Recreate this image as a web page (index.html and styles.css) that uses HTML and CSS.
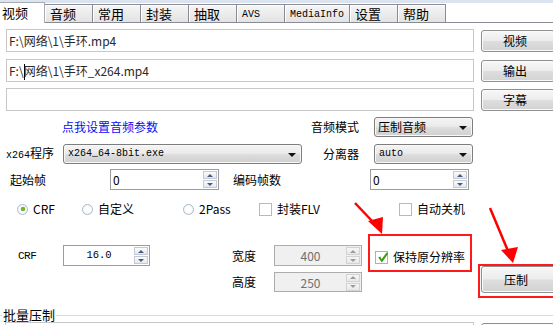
FILE: index.html
```html
<!DOCTYPE html>
<html lang="zh-CN">
<head>
<meta charset="utf-8">
<title>视频压制</title>
<link rel="stylesheet" href="styles.css">
</head>
<body>
<div class="tabs">
  <div class="tab active">视频</div>
  <div class="tab">音频</div>
  <div class="tab">常用</div>
  <div class="tab">封装</div>
  <div class="tab">抽取</div>
  <div class="tab tab-mono">AVS</div>
  <div class="tab tab-mono tab-wide">MediaInfo</div>
  <div class="tab">设置</div>
  <div class="tab">帮助</div>
</div>

<div class="panel">
  <div class="row r-file r1">
    <div class="field">F:\网络\1\手环.mp4</div>
    <div class="btn side">视频</div>
  </div>
  <div class="row r-file r2">
    <div class="field">F:\<span class="caret"></span>网络\1\手环_x264.mp4</div>
    <div class="btn side">输出</div>
  </div>
  <div class="row r-file r3">
    <div class="field"></div>
    <div class="btn side">字幕</div>
  </div>

  <div class="row r4">
    <span class="link">点我设置音频参数</span>
    <span class="lbl w-audio">音频模式</span>
    <div class="combo w-small"><span class="combo-text">压制音频</span><span class="arrow"></span></div>
  </div>

  <div class="row r5">
    <span class="lbl w-x264"><span class="mono">x264</span>程序</span>
    <div class="combo w-x264box"><span class="combo-text mono">x264_64-8bit.exe</span><span class="arrow"></span></div>
    <span class="lbl w-demux">分离器</span>
    <div class="combo w-small"><span class="combo-text mono">auto</span><span class="arrow"></span></div>
  </div>

  <div class="row r6">
    <span class="lbl w-start">起始帧</span>
    <div class="spin w-startbox"><span class="spin-val">0</span><span class="spin-btns"><span class="sb up"></span><span class="sb down"></span></span></div>
    <span class="lbl w-count">编码帧数</span>
    <div class="spin w-small"><span class="spin-val">0</span><span class="spin-btns"><span class="sb up"></span><span class="sb down"></span></span></div>
  </div>

  <div class="row r7">
    <label class="opt o1"><span class="radio checked"></span>CRF</label>
    <label class="opt o2"><span class="radio"></span>自定义</label>
    <label class="opt o3"><span class="radio"></span>2Pass</label>
    <label class="opt o4"><span class="check"></span>封装FLV</label>
    <label class="opt"><span class="check"></span>自动关机</label>
  </div>

  <div class="lower">
    <div class="row col-crf">
      <span class="lbl mono crf-lbl w-crf">CRF</span>
      <div class="spin w-crfbox"><span class="spin-val center mono">16.0</span><span class="spin-btns"><span class="sb up"></span><span class="sb down"></span></span></div>
    </div>
    <div class="col-wh">
      <div class="row wh-row">
        <span class="lbl w-wh">宽度</span>
        <div class="spin disabled w-whbox"><span class="spin-val center">400</span><span class="spin-btns"><span class="sb up"></span><span class="sb down"></span></span></div>
      </div>
      <div class="row wh-row h2">
        <span class="lbl w-wh">高度</span>
        <div class="spin disabled w-whbox"><span class="spin-val center">250</span><span class="spin-btns"><span class="sb up"></span><span class="sb down"></span></span></div>
      </div>
    </div>
    <div class="redbox keep">
      <label class="opt"><span class="check on"><svg width="13" height="13" viewBox="0 0 13 13"><path d="M2.2 6.6 L4.3 5.6 L5.6 8.2 L10.6 1.4 L12.2 2.6 L5.9 11.6 Z" fill="#3f9a1a"/></svg></span>保持原分辨率</label>
    </div>
    <div class="redbox go">
      <div class="btn big">压制</div>
    </div>
  </div>

  <div class="group">
    <span class="gline gl-left"></span>
    <span class="gtitle">批量压制</span>
    <span class="gline gl-right"></span>
  </div>
  <div class="row r-batch">
    <div class="field batch"></div>
    <div class="btn side batch-btn"></div>
  </div>
</div>

<svg class="arrows" width="553" height="325" viewBox="0 0 553 325">
  <line x1="355" y1="203" x2="374" y2="223" stroke="#ff0000" stroke-width="2.5"/>
  <polygon points="368,221 383,217 382,234" fill="#ff0000"/>
  <line x1="490" y1="208" x2="508" y2="251" stroke="#ff0000" stroke-width="2.5"/>
  <polygon points="501,250 518,247 513,263" fill="#ff0000"/>
</svg>
</body>
</html>
```

FILE: styles.css
```css
* { box-sizing: border-box; }
html, body { margin: 0; padding: 0; }
body {
  width: 553px;
  height: 325px;
  overflow: hidden;
  position: relative;
  background: #fff;
  font-family: "Noto Sans CJK SC", "Noto Sans", sans-serif;
  font-size: 12px;
  line-height: 16px;
  color: #000;
}
.mono { font-family: "Liberation Mono", "DejaVu Sans Mono", monospace; font-size: 10px; }

/* tabs */
.tabs {
  display: flex;
  align-items: flex-end;
  height: 23px;
  border-bottom: 1px solid #898c95;
  background: linear-gradient(#dae3ee 0, #dae3ee 3px, #fff 3px);
}
.tab {
  flex: none;
  width: 49px;
  height: 18px;
  margin-right: -1px;
  padding: 1px 0 0 5px;
  border: 1px solid #898c95;
  border-bottom: 0;
  background: linear-gradient(#f5f5f5, #e3e3e3);
  box-shadow: inset 1px 1px 0 #fff;
  font-size: 13px;
  line-height: 16px;
}
.tab.active {
  width: 45px;
  height: 21px;
  margin-bottom: -1px;
  padding: 2px 0 0 2px;
  background: #fff;
  border-left: 0;
  border-color: #a8abb2;
  box-shadow: none;
  position: relative;
  z-index: 1;
}
.tab-mono { font-family: "Liberation Mono", "DejaVu Sans Mono", monospace; font-size: 10px; padding-top: 2px; }
.tab-wide { width: 66px; }

/* panel */
.panel { padding-left: 6px; }
.row { display: flex; align-items: center; }
.r-file { height: 23px; align-items: flex-start; }
.r1 { margin-top: 6px; }
.r2 { margin-top: 7px; }
.r3 { margin-top: 6px; }
.r4 { margin-top: 6px; height: 20px; }
.r5 { margin-top: 7px; height: 20px; }
.r6 { margin-top: 5px; height: 21px; }
.r7 { margin-top: 11px; height: 16px; }

.field {
  flex: none;
  width: 468px;
  height: 23px;
  border: 1px solid #c8c8c8;
  padding: 2px 0 0 2px;
  line-height: 17px;
  color: #2a2a2a;
  white-space: nowrap;
}
.caret {
  display: inline-block;
  width: 0;
  height: 16px;
  border-left: 1px solid #000;
  vertical-align: -4px;
  margin-right: -1px;
}
.btn {
  flex: none;
  display: flex;
  align-items: center;
  justify-content: center;
  width: 74px;
  border: 1px solid #8f8f8f;
  border-radius: 3px;
  background: linear-gradient(#f7f7f7, #ececec 48%, #dedede 52%, #d2d2d2);
  box-shadow: inset 0 0 0 1px #fbfbfb;
  padding-right: 6px;
}
.btn.side { height: 22px; margin-left: 7px; margin-top: 1px; }
.btn.big { height: 27px; }

.link { color: #0a0af5; margin-left: 56px; width: 249px; flex: none; }
.lbl { flex: none; white-space: nowrap; }
.w-audio { width: 63px; }
.w-x264 { width: 57px; }
.w-demux { width: 51px; margin-left: 21px; }
.w-start { width: 100px; margin-left: 4px; }
.w-count { width: 137px; margin-left: 14px; }
.w-crf { width: 45px; margin-left: 12px; }
.crf-lbl { font-size: 11px; letter-spacing: -0.5px; }
.w-wh { width: 42px; }

.combo {
  flex: none;
  display: flex;
  align-items: center;
  height: 20px;
  border: 1px solid #7d7d7d;
  border-radius: 3px;
  background: linear-gradient(#f4f4f4, #ebebeb 45%, #dcdcdc 55%, #d0d0d0);
  box-shadow: inset 0 0 0 1px #f8f8f8;
  padding-left: 3px;
}
.combo-text { white-space: nowrap; }
.combo-text.mono { padding-left: 1px; }
.arrow {
  margin-left: auto;
  margin-right: 5px;
  margin-top: 2px;
  width: 0;
  height: 0;
  border-left: 4px solid transparent;
  border-right: 4px solid transparent;
  border-top: 4px solid #111;
}
.w-small { width: 99px; }
.w-x264box { width: 239px; }

.spin {
  flex: none;
  display: flex;
  height: 21px;
  border: 1px solid #9c9c9c;
  background: #fff;
}
.spin-val { flex: 1; padding-left: 2px; line-height: 19px; }
.spin-val.center { text-align: center; padding-left: 0; }
.spin-val.mono { font-size: 10.5px; }
.spin-btns { display: flex; flex-direction: column; justify-content: center; gap: 1px; width: 14px; margin-right: 1px; }
.sb {
  height: 8px;
  border: 1px solid #c3cad4;
  background: linear-gradient(#fafbfc, #e4e8ee);
  display: flex;
  align-items: center;
  justify-content: center;
}
.sb::before {
  content: "";
  width: 0;
  height: 0;
  border-left: 3px solid transparent;
  border-right: 3px solid transparent;
}
.sb.up::before { border-bottom: 3px solid #4a5a82; }
.sb.down::before { border-top: 3px solid #4a5a82; }
.spin.disabled { background: #f0f0f0; border-color: #adadad; color: #6f6f6f; }
.spin.disabled .sb { border-color: #d3d3d3; background: linear-gradient(#f6f6f6, #e8e8e8); }
.spin.disabled .sb.up::before { border-bottom-color: #9c9c9c; }
.spin.disabled .sb.down::before { border-top-color: #9c9c9c; }
.w-startbox { width: 109px; }
.w-crfbox { width: 87px; }
.w-whbox { width: 88px; height: 21px; }
.h2 .w-whbox { height: 20px; }

.opt { display: flex; align-items: center; gap: 5px; flex: none; white-space: nowrap; }
.o1 { margin-left: 11px; width: 65px; }
.o2 { width: 101px; }
.o3 { width: 76px; }
.o4 { width: 140px; }
.radio {
  width: 11px;
  height: 11px;
  border-radius: 50%;
  border: 1px solid #a9bac9;
  background: radial-gradient(circle, #ffffff 40%, #e9eef3 100%);
  display: flex;
  align-items: center;
  justify-content: center;
}
.radio.checked::before {
  content: "";
  width: 4px;
  height: 4px;
  border-radius: 50%;
  background: #74b52a;
  box-shadow: 0 0 1px #4f8f17;
}
.check {
  width: 13px;
  height: 13px;
  border: 1px solid #9fc0d8;
  background: #fff;
  position: relative;
}
.check.on { border-color: #9ab6cc; }
.check.on svg { position: absolute; left: 0; top: -1px; }

/* lower block */
.lower { display: flex; align-items: flex-start; margin-top: 17px; }
.col-crf { margin-top: 11px; height: 21px; }
.col-wh { margin-left: 82px; margin-top: 11px; display: flex; flex-direction: column; gap: 6px; }
.wh-row { height: 21px; }
.wh-row.h2 { height: 20px; }
.redbox { border: 2px solid #ff1a1a; flex: none; }
.keep { margin-left: 6px; width: 104px; height: 38px; padding: 8px 0 0 5px; display: flex; align-items: center; }
.go { margin-left: 6px; margin-top: 30px; width: 80px; height: 34px; padding: 0 0 3px 1px; }
.go .btn { width: 76px; }

/* group */
.group { display: flex; align-items: center; height: 14px; margin: 10px 0 0 -6px; }
.gline { height: 1px; background: #d4dde4; }
.gl-left { width: 2px; }
.gl-right { flex: 1; }
.gtitle { font-size: 13px; line-height: 14px; padding: 0 1px; }
.r-batch { height: 23px; align-items: flex-start; margin-left: -1px; }
.field.batch { width: 469px; }
.batch-btn { margin-top: 1px; }

.arrows { position: absolute; left: 0; top: 0; pointer-events: none; }
```
